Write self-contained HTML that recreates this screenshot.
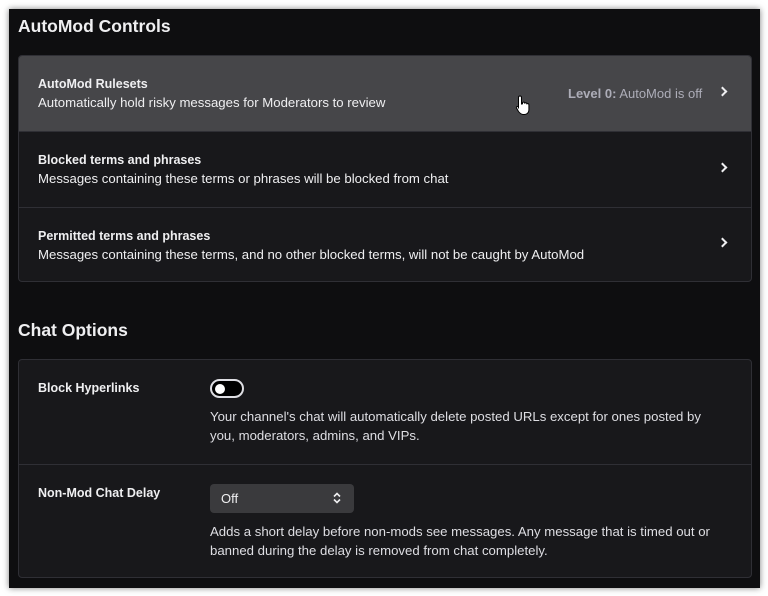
<!DOCTYPE html>
<html><head><style>
*{margin:0;padding:0;box-sizing:border-box}
body{width:768px;height:596px;background:#fff;font-family:"Liberation Sans",sans-serif;position:relative;overflow:hidden}
#p{position:absolute;left:9px;top:9px;width:751px;height:579px;background:#0e0e10;box-shadow:0 0 6px rgba(0,0,0,.5)}
h2{position:absolute;left:9px;color:#efeff1;font-size:17.5px;font-weight:bold}
.card{position:absolute;left:9px;width:734px;background:#18181b;border:1px solid #2f2f35;border-radius:4px;overflow:hidden}
.row{position:absolute;left:0;width:732px;border-top:1px solid #2f2f35}
.t{position:absolute;left:19px;color:#efeff1;font-size:12.5px;font-weight:bold}
.d{position:absolute;left:19px;color:#efeff1;font-size:13.2px}
.chev{position:absolute;left:700px;width:7px;height:7px;border-right:2px solid #efeff1;border-top:2px solid #efeff1;transform:rotate(45deg)}
.p{position:absolute;left:191px;color:#dedee3;font-size:13.2px;line-height:19px}
</style></head><body>
<div id="p">
<h2 style="top:7px">AutoMod Controls</h2>
<div class="card" style="top:46px;height:227px">
 <div class="row" style="top:0;height:75px;background:#464649;border-top:none">
  <div class="t" style="top:21px">AutoMod Rulesets</div>
  <div class="d" style="top:39px">Automatically hold risky messages for Moderators to review</div>
  <div style="position:absolute;left:549px;top:30px;color:#adadb8;font-size:13px"><b>Level 0:</b> AutoMod is off</div>
  <div class="chev" style="top:32px"></div>
  <svg style="position:absolute;left:496px;top:38px" width="16" height="22" viewBox="0 0 16 22"><path d="M5 2c1 0 1.5.6 1.5 1.5V10l1-.2V8.5c1-.8 2.2-.4 2.3.6.8-.6 2-.3 2.1.7.9-.5 2 0 2 1V16c0 2.5-2 4.5-4.5 4.5h-1C6 20.5 4.7 19 3.5 17.5L1.5 14c-.5-1 .6-2 1.6-1.2L3.5 13.5V3.5C3.5 2.6 4 2 5 2z" fill="#fff" stroke="#000" stroke-width="1"/></svg>
 </div>
 <div class="row" style="top:75px;height:76px">
  <div class="t" style="top:21px">Blocked terms and phrases</div>
  <div class="d" style="top:39px">Messages containing these terms or phrases will be blocked from chat</div>
  <div class="chev" style="top:32px"></div>
 </div>
 <div class="row" style="top:151px;height:76px">
  <div class="t" style="top:21px">Permitted terms and phrases</div>
  <div class="d" style="top:39px">Messages containing these terms, and no other blocked terms, will not be caught by AutoMod</div>
  <div class="chev" style="top:31px"></div>
 </div>
</div>
<h2 style="top:311px">Chat Options</h2>
<div class="card" style="top:350px;height:219px">
 <div class="row" style="top:0;height:104px;border-top:none">
  <div class="t" style="top:21px">Block Hyperlinks</div>
  <div style="position:absolute;left:191px;top:19px;width:34px;height:19px;border:2px solid #dedee3;border-radius:10px;background:#000"><div style="position:absolute;left:3px;top:3px;width:10px;height:10px;border-radius:50%;background:#fff"></div></div>
  <div class="p" style="top:47px">Your channel's chat will automatically delete posted URLs except for ones posted by<br>you, moderators, admins, and VIPs.</div>
 </div>
 <div class="row" style="top:104px;height:115px">
  <div class="t" style="top:21px">Non-Mod Chat Delay</div>
  <div style="position:absolute;left:191px;top:19px;width:144px;height:29px;background:#3a3a3d;border-radius:4px;color:#efeff1;font-size:13px;padding:7px 11px">Off<svg style="position:absolute;right:13px;top:8px" width="8" height="12" viewBox="0 0 8 12"><path d="M1 4.5L4 1.5 7 4.5M1 7.5L4 10.5 7 7.5" fill="none" stroke="#efeff1" stroke-width="1.6"/></svg></div>
  <div class="p" style="top:57px">Adds a short delay before non-mods see messages. Any message that is timed out or<br>banned during the delay is removed from chat completely.</div>
 </div>
</div>
</div>
</body></html>
